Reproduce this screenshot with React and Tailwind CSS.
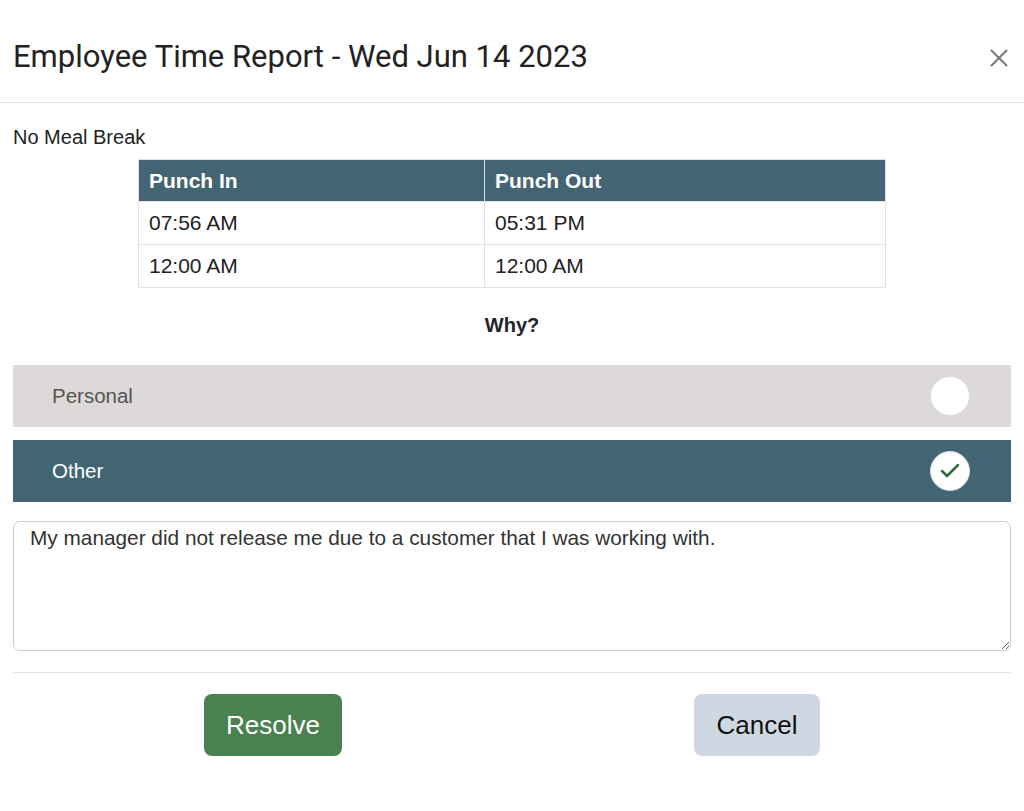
import { Check, X } from 'lucide-react';

const punches = [
  ['07:56 AM', '05:31 PM'],
  ['12:00 AM', '12:00 AM'],
];

function Option({ label, selected }) {
  return (
    <div
      className={
        'h-[62px] flex items-center justify-between pl-[39px] pr-[41px] text-[20.5px] ' +
        (selected ? 'bg-[#436573] text-white' : 'bg-[#dcd9d8] text-[#555]')
      }
    >
      <span>{label}</span>
      <span className="w-[40px] h-[40px] rounded-full bg-white border border-[#d6dbe3] flex items-center justify-center">
        {selected && <Check size={24} strokeWidth={2.5} className="text-[#2f6b35]" />}
      </span>
    </div>
  );
}

export default function App() {
  return (
    <div className="min-h-screen bg-white text-[#212529]" style={{ fontFamily: '"Liberation Sans", Arial, sans-serif' }}>
      {/* header */}
      <div className="h-[103px] border-b border-[#dee2e6] flex items-center justify-between pl-[13px] pr-[10px] pt-[13px]">
        <h1 className="text-[31px] text-[#222]" style={{ fontFamily: 'Roboto, sans-serif' }}>
          Employee Time Report - Wed Jun 14 2023
        </h1>
        <X size={30} strokeWidth={1.6} className="text-[#777]" />
      </div>

      <div className="px-[13px]">
        <div className="text-[20px] text-[#222] mt-[22px] leading-[24px]">No Meal Break</div>

        <table className="mx-auto mt-[10px] w-[748px] border-collapse text-[21px] text-[#222]">
          <thead>
            <tr className="bg-[#436573] text-white h-[42px]">
              <th className="text-left font-bold px-[10px] border border-[#dee2e6] w-[346px]">Punch In</th>
              <th className="text-left font-bold px-[10px] border border-[#dee2e6]">Punch Out</th>
            </tr>
          </thead>
          <tbody>
            {punches.map((row, i) => (
              <tr key={i} className="h-[43px]">
                <td className="px-[10px] border border-[#dee2e6]">{row[0]}</td>
                <td className="px-[10px] border border-[#dee2e6]">{row[1]}</td>
              </tr>
            ))}
          </tbody>
        </table>

        <div className="text-center font-bold text-[20px] mt-[25px] leading-[24px]">Why?</div>

        <div className="mt-[28px] flex flex-col gap-[13px]">
          <Option label="Personal" />
          <Option label="Other" selected />
        </div>

        <textarea
          className="mt-[19px] block w-full h-[130px] border border-[#ccd0d6] rounded-[7px] px-[16px] py-0 text-[20.8px] text-[#333] outline-none resize-y"
          defaultValue="My manager did not release me due to a customer that I was working with."
        />

        <div className="mt-[21px] border-t border-[#dee2e6]" />

        <div className="flex mt-[21px] pl-[191px]">
          <button className="h-[62px] w-[138px] rounded-[8px] bg-[#4a8150] text-white text-[26px]">Resolve</button>
          <button className="ml-[352px] h-[62px] w-[126px] rounded-[8px] bg-[#cfd8e2] text-[#111] text-[26px]">Cancel</button>
        </div>
      </div>
    </div>
  );
}
